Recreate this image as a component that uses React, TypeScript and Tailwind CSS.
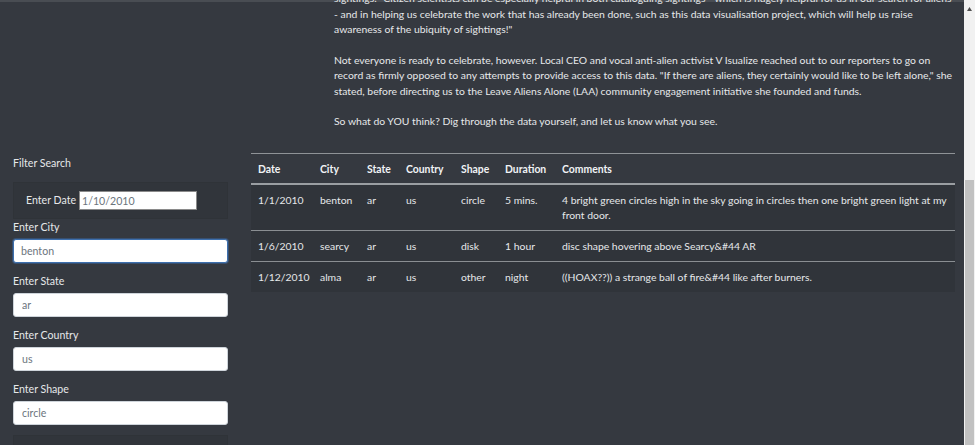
const font = { fontFamily: '"Segoe UI", Lato, "Noto Sans", sans-serif' };

type Sighting = {
  date: string;
  city: string;
  state: string;
  country: string;
  shape: string;
  duration: string;
  comments: string;
};

const sightings: Sighting[] = [
  {
    date: "1/1/2010",
    city: "benton",
    state: "ar",
    country: "us",
    shape: "circle",
    duration: "5 mins.",
    comments:
      "4 bright green circles high in the sky going in circles then one bright green light at my front door.",
  },
  {
    date: "1/6/2010",
    city: "searcy",
    state: "ar",
    country: "us",
    shape: "disk",
    duration: "1 hour",
    comments: "disc shape hovering above Searcy&#44 AR",
  },
  {
    date: "1/12/2010",
    city: "alma",
    state: "ar",
    country: "us",
    shape: "other",
    duration: "night",
    comments: "((HOAX??)) a strange ball of fire&#44 like after burners.",
  },
];

const filters = [
  { label: "Enter City", placeholder: "benton", focused: true },
  { label: "Enter State", placeholder: "ar" },
  { label: "Enter Country", placeholder: "us" },
  { label: "Enter Shape", placeholder: "circle" },
];

function Scrollbar() {
  return (
    <div className="w-[11px] shrink-0 bg-[#f1f1f1] flex flex-col">
      <div className="h-[17px] flex items-center justify-center">
        <svg width="5" height="4" viewBox="0 0 5 4">
          <path d="M2.5 0 L5 4 L0 4 Z" fill="#505050" />
        </svg>
      </div>
      <div className="h-[163px]" />
      <div className="flex-1 mx-[1px] bg-[#c1c1c1]" />
    </div>
  );
}

export default function App() {
  return (
    <div className="h-[445px] w-[975px] overflow-hidden flex bg-[#353940] text-[#e6e8ea]" style={font}>
      <div className="flex-1 flex flex-col min-w-0">
        <div className="h-[2px] bg-[#494d53] shrink-0" />
        <div className="flex flex-1 min-h-0">
          <aside className="w-[251px] shrink-0 pl-[13px] pr-[23px] pt-[153px] text-[10.6px]">
            <h2 className="leading-[16px] mb-[11px]">Filter Search</h2>

            <div className="border border-[#2f3338] bg-[#31353b] h-[37px] flex items-center pl-[12px]">
              <label className="mr-[3px]">Enter Date</label>
              <input
                className="w-[118px] h-[19px] bg-white border border-[#8a8a8a] px-[2px] text-[10.6px] text-[#6c757d] placeholder:text-[#6c757d] outline-none"
                placeholder="1/10/2010"
                style={font}
              />
            </div>

            {filters.map((f) => (
              <div key={f.label} className="mb-[10px] last:mb-0">
                <label className="block leading-[16px] mb-[4px]">{f.label}</label>
                <input
                  className={
                    f.focused
                      ? "block w-full h-[24px] box-border rounded-[3px] bg-white border-[1.5px] border-[#3d6fad] px-[7px] text-[10.6px] text-[#6c757d] placeholder:text-[#6c757d] outline-none shadow-[0_0_0_1px_rgba(60,120,200,0.35)]"
                      : "block w-full h-[24px] box-border rounded-[3px] bg-white border border-[#ced4da] px-[8px] text-[10.6px] text-[#6c757d] placeholder:text-[#6c757d] outline-none"
                  }
                  placeholder={f.placeholder}
                  style={font}
                />
              </div>
            ))}

            <div className="mt-[7px] h-[30px] border border-[#2f3338] bg-[#31353b]" />
          </aside>

          <main className="flex-1 min-w-0 pr-[9px] -mt-[11px]">
            <div className="ml-[83px] mr-[2px] text-[10.4px] leading-[15.5px]">
              <p>
                sightings. &quot;Citizen scientists can be especially helpful in both cataloguing sightings - which is hugely helpful for us in our search for aliens - and in helping us celebrate the work that has already been done, such as this data visualisation project, which will help us raise awareness of the ubiquity of sightings!&quot;
              </p>
              <p className="mt-[15px]">
                Not everyone is ready to celebrate, however. Local CEO and vocal anti-alien activist V Isualize reached out to our reporters to go on record as firmly opposed to any attempts to provide access to this data. &quot;If there are aliens, they certainly would like to be left alone,&quot; she stated, before directing us to the Leave Aliens Alone (LAA) community engagement initiative she founded and funds.
              </p>
              <p className="mt-[15px]">
                So what do YOU think? Dig through the data yourself, and let us know what you see.
              </p>
            </div>

            <table className="mt-[23px] w-full table-fixed border-collapse text-[10.4px] leading-[15px]">
              <colgroup>
                <col className="w-[62px]" />
                <col className="w-[47px]" />
                <col className="w-[39px]" />
                <col className="w-[55px]" />
                <col className="w-[44px]" />
                <col className="w-[57px]" />
                <col />
              </colgroup>
              <thead>
                <tr className="border-t border-[#8f9397] border-b-2 border-b-[#9a9ea2]">
                  {["Date", "City", "State", "Country", "Shape", "Duration", "Comments"].map((h) => (
                    <th key={h} className="text-left font-bold px-[7px] pt-[8px] pb-[6px] text-[#f1f3f5]">
                      {h}
                    </th>
                  ))}
                </tr>
              </thead>
              <tbody className="bg-[#30343a]">
                {sightings.map((s) => (
                  <tr key={s.date} className="border-b border-[#8a8e92] last:border-b-0">
                    <td className="px-[7px] pt-[8px] pb-[7px] align-top">{s.date}</td>
                    <td className="px-[7px] pt-[8px] pb-[7px] align-top">{s.city}</td>
                    <td className="px-[7px] pt-[8px] pb-[7px] align-top">{s.state}</td>
                    <td className="px-[7px] pt-[8px] pb-[7px] align-top">{s.country}</td>
                    <td className="px-[7px] pt-[8px] pb-[7px] align-top">{s.shape}</td>
                    <td className="px-[7px] pt-[8px] pb-[7px] align-top">{s.duration}</td>
                    <td className="px-[7px] pt-[8px] pb-[7px] align-top">{s.comments}</td>
                  </tr>
                ))}
              </tbody>
            </table>
          </main>
        </div>
      </div>
      <Scrollbar />
    </div>
  );
}
